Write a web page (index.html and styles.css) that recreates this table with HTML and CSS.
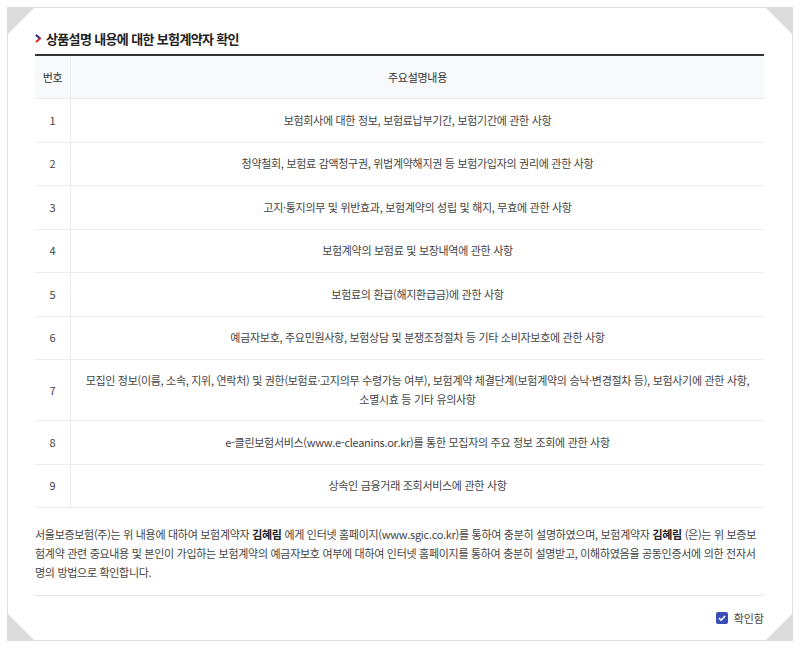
FILE: index.html
```html
<!DOCTYPE html>
<html lang="ko">
<head>
<meta charset="utf-8">
<link rel="stylesheet" href="styles.css">
</head>
<body>
<div class="frame">
  <span class="corner tl"></span>
  <span class="corner tr"></span>
  <span class="corner bl"></span>
  <span class="corner br"></span>
  <div class="inner">
    <h2 class="title">
      <svg class="chev" width="7" height="9" viewBox="0 0 7 9"><path d="M1 1 L5 4.5 L1 8" fill="none" stroke="#e0282e" stroke-width="2"/><path d="M1 1 L5 4.5" fill="none" stroke="#2b3f9e" stroke-width="2"/></svg>
      상품설명 내용에 대한 보험계약자 확인
    </h2>
    <table class="tbl">
      <thead>
        <tr><th class="num">번호</th><th>주요설명내용</th></tr>
      </thead>
      <tbody>
        <tr><td class="num">1</td><td>보험회사에 대한 정보, 보험료납부기간, 보험기간에 관한 사항</td></tr>
        <tr><td class="num">2</td><td>청약철회, 보험료 감액청구권, 위법계약해지권 등 보험가입자의 권리에 관한 사항</td></tr>
        <tr><td class="num">3</td><td>고지·통지의무 및 위반효과, 보험계약의 성립 및 해지, 무효에 관한 사항</td></tr>
        <tr><td class="num">4</td><td>보험계약의 보험료 및 보장내역에 관한 사항</td></tr>
        <tr><td class="num">5</td><td>보험료의 환급(해지환급금)에 관한 사항</td></tr>
        <tr><td class="num">6</td><td>예금자보호, 주요민원사항, 보험상담 및 분쟁조정절차 등 기타 소비자보호에 관한 사항</td></tr>
        <tr class="tall"><td class="num">7</td><td>모집인 정보(이름, 소속, 지위, 연락처) 및 권한(보험료·고지의무 수령가능 여부), 보험계약 체결단계(보험계약의 승낙·변경절차 등), 보험사기에 관한 사항,<br>소멸시효 등 기타 유의사항</td></tr>
        <tr><td class="num">8</td><td>e-클린보험서비스(www.e-cleanins.or.kr)를 통한 모집자의 주요 정보 조회에 관한 사항</td></tr>
        <tr><td class="num">9</td><td>상속인 금융거래 조회서비스에 관한 사항</td></tr>
      </tbody>
    </table>
    <p class="desc">서울보증보험(주)는 위 내용에 대하여 보험계약자 <b>김혜림</b> 에게 인터넷 홈페이지(www.sgic.co.kr)를 통하여 충분히 설명하였으며, 보험계약자 <b>김혜림</b> (은)는 위 보증보험계약 관련 중요내용 및 본인이 가입하는 보험계약의 예금자보호 여부에 대하여 인터넷 홈페이지를 통하여 충분히 설명받고, 이해하였음을 공동인증서에 의한 전자서명의 방법으로 확인합니다.</p>
    <div class="confirm">
      <label class="chk">
        <span class="box"><svg width="12" height="12" viewBox="0 0 12 12"><path d="M3 6.2 L5.2 8.2 L9 4" fill="none" stroke="#fff" stroke-width="1.6"/></svg></span>
        <span>확인함</span>
      </label>
    </div>
  </div>
</div>
</body>
</html>
```

FILE: styles.css
```css
html, body {
  margin: 0;
  padding: 0;
  background: #fff;
}
body {
  font-family: "Noto Sans CJK KR", "Noto Sans", sans-serif;
  color: #444;
  padding: 7px;
}
.frame {
  position: relative;
  width: 786px;
  height: 634px;
  box-sizing: border-box;
  border: 1px solid #e2e2e2;
  background: #fff;
}
.corner {
  position: absolute;
  width: 28px;
  height: 28px;
  background: #dcdcdc;
}
.corner.tl { left: -1px; top: -1px; clip-path: polygon(0 0, 100% 0, 0 100%); }
.corner.tr { right: -1px; top: -1px; clip-path: polygon(0 0, 100% 0, 100% 100%); }
.corner.bl { left: -1px; bottom: -1px; clip-path: polygon(0 0, 100% 100%, 0 100%); }
.corner.br { right: -1px; bottom: -1px; clip-path: polygon(100% 0, 100% 100%, 0 100%); }
.inner {
  padding: 14px 28px 0 27px;
}
.title {
  margin: 0;
  height: 32px;
  display: flex;
  align-items: center;
  gap: 4px;
  font-size: 13px;
  font-weight: 700;
  color: #222;
  letter-spacing: -0.65px;
}
.chev { flex: none; }
.tbl {
  width: 100%;
  border-collapse: collapse;
  border-top: 2px solid #333;
  font-size: 11px;
  letter-spacing: -0.3px;
  color: #444;
}
.tbl th, .tbl td {
  height: 42.5px;
  padding: 0 10px;
  text-align: center;
  border-bottom: 1px solid #ececec;
  font-weight: 400;
  line-height: 19px;
}
.tbl th {
  background: #f8f9fb;
  height: 42px;
  color: #333;
}
.tbl .num {
  width: 35px;
  padding: 0;
  white-space: nowrap;
  border-right: 1px solid #ececec;
}
.tbl tr.tall td { height: 60px; }
.desc {
  margin: 17px 0 0;
  font-size: 11px;
  line-height: 19px;
  letter-spacing: -0.3px;
  color: #444;
  padding-bottom: 13px;
  border-bottom: 1px solid #e6e6e6;
}
.desc b { color: #222; font-weight: 700; }
.confirm {
  display: flex;
  justify-content: flex-end;
  padding-top: 14px;
}
.chk {
  display: flex;
  align-items: center;
  gap: 6px;
  font-size: 11px;
  color: #444;
}
.box {
  width: 12px;
  height: 12px;
  background: #3a4db7;
  border-radius: 2px;
  display: flex;
}
```
